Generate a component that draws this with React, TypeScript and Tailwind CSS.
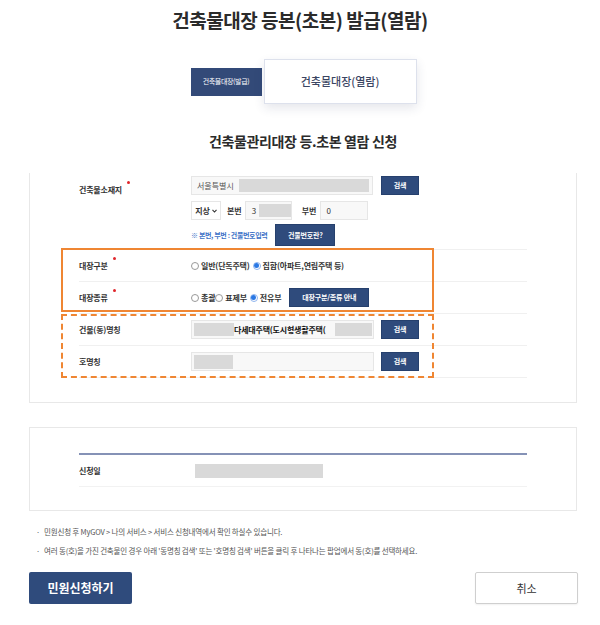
// ─── helpers ──────────────────────────────────────────────────────────────────

function NavyButton({ children, className = '' }: { children: React.ReactNode; className?: string }) {
  return (
    <button
      type="button"
      className={`flex items-center justify-center bg-[#2f4b7c] text-white font-bold text-[7px] leading-none tracking-tight border border-[#26406d] ${className}`}
    >
      {children}
    </button>
  )
}

function Radio({ checked, label }: { checked?: boolean; label: string }) {
  return (
    <span className="flex items-center gap-[2px]">
      <span
        className={`flex h-[8px] w-[8px] items-center justify-center rounded-full border ${
          checked ? 'border-[#8fb4ee]' : 'border-[#999]'
        } bg-white`}
      >
        {checked && <span className="h-[5px] w-[5px] rounded-full bg-[#2a78e4]" />}
      </span>
      <span className="text-[8px] font-bold leading-[12px] text-[#333] tracking-tight">{label}</span>
    </span>
  )
}

function Label({ children, required }: { children: React.ReactNode; required?: boolean }) {
  return (
    <span className="relative inline-block text-[8px] font-bold text-[#333] tracking-tight leading-[12px]">
      {children}
      {required && (
        <span className="absolute -right-[8px] -top-[3px] h-[3px] w-[3px] rounded-full bg-[#e0262b]" />
      )}
    </span>
  )
}

function Row({ label, required, children }: { label: string; required?: boolean; children: React.ReactNode }) {
  return (
    <div className="flex h-[32px] items-center border-t border-[#f0f0f0] leading-[12px]">
      <div className="flex w-[112px] items-center">
        <Label required={required}>{label}</Label>
      </div>
      <div className="flex items-center">{children}</div>
    </div>
  )
}

const inputBox = 'h-[19px] border border-[#e6e6e6] bg-[#f8f8f8] flex items-center leading-[12px]'

// ─── App ──────────────────────────────────────────────────────────────────────

export default function App() {
  return (
    <div className="h-[625px] w-[600px] overflow-hidden bg-white font-['Noto_Sans_CJK_KR','Noto_Sans',sans-serif] text-[#333]">
      <h1 className="pt-[9px] text-center text-[19px] font-bold leading-[22px] tracking-tight text-[#2b2b2b]">
        건축물대장 등본(초본) 발급(열람)
      </h1>

      <div className="mt-[28px] flex items-center justify-center pl-[7px]">
        <div className="flex h-[28px] w-[71px] items-center justify-center bg-[#334a78] text-[7px] tracking-tighter text-white">
          건축물대장(발급)
        </div>
        <div className="ml-[2px] flex h-[45px] w-[153px] items-center justify-center border border-[#dde1ec] bg-white text-[11px] font-medium text-[#3a4562] shadow-[0_4px_10px_rgba(40,50,90,0.12)]">
          건축물대장(열람)
        </div>
      </div>

      <h2 className="mt-[28px] pl-[6px] text-center text-[14px] font-bold leading-[18px] tracking-tight text-[#2b2b2b]">
        건축물관리대장 등.초본 열람 신청
      </h2>

      {/* main form card */}
      <div className="relative ml-[29px] mt-[23px] w-[548px] border-x border-b border-[#e8e8e8] pb-[24px] pl-[49px] pr-[49px]">
        <div className="flex h-[76px]">
          <div className="w-[112px] pt-[7px] leading-[12px]">
            <Label required>건축물소재지</Label>
          </div>
          <div className="flex flex-col pt-[3px]">
            <div className="flex items-center">
              <div className={`${inputBox} w-[182px] pl-[5px]`}>
                <span className="text-[8px] text-[#555]">서울특별시</span>
                <span className="ml-[5px] h-[13px] w-[130px] bg-[#d9d9d9]" />
              </div>
              <NavyButton className="ml-[8px] h-[19px] w-[38px]">검색</NavyButton>
            </div>
            <div className="mt-[6px] flex items-center leading-[12px]">
              <div className={`${inputBox} w-[30px] justify-center gap-[2px] bg-white`}>
                <span className="text-[8px] font-bold">지상</span>
                <svg width="5" height="4" viewBox="0 0 5 4">
                  <path d="M0.5 0.8 L2.5 3 L4.5 0.8" fill="none" stroke="#333" strokeWidth="1.1" />
                </svg>
              </div>
              <span className="ml-[6px] text-[8px] font-bold">본번</span>
              <div className={`${inputBox} ml-[3px] w-[47px] pl-[6px]`}>
                <span className="text-[8px]">3</span>
                <span className="ml-[3px] h-[13px] w-[34px] bg-[#d9d9d9]" />
              </div>
              <span className="ml-[10px] text-[8px] font-bold">부번</span>
              <div className={`${inputBox} ml-[4px] w-[48px] pl-[5px]`}>
                <span className="text-[8px]">0</span>
              </div>
            </div>
            <div className="mt-[4px] flex items-center leading-[12px]">
              <span className="text-[7px] font-bold tracking-tighter text-[#3b70c6]">※ 본번, 부번 : 건물번호입력</span>
              <NavyButton className="ml-[8px] h-[22px] w-[60px]">건물번호란?</NavyButton>
            </div>
          </div>
        </div>

        <Row label="대장구분" required>
          <div className="flex items-center gap-[3px]">
            <Radio label="일반(단독주택)" />
            <Radio checked label="집합(아파트,연립주택 등)" />
          </div>
        </Row>
        <Row label="대장종류" required>
          <div className="flex items-center">
            <Radio label="총괄" />
            <Radio label="표제부" />
            <span className="ml-[3px]">
              <Radio checked label="전유부" />
            </span>
            <NavyButton className="ml-[8px] h-[19px] w-[80px]">대장구분/종류 안내</NavyButton>
          </div>
        </Row>
        <Row label="건물(동)명칭">
          <div className={`${inputBox} w-[183px] pl-[2px]`}>
            <span className="h-[13px] w-[40px] bg-[#d9d9d9]" />
            <span className="w-[101px] overflow-hidden whitespace-nowrap text-[8px] font-bold tracking-tight text-[#111]">
              다세대주택(도시형생활주택(
            </span>
            <span className="h-[13px] w-[37px] bg-[#d9d9d9]" />
          </div>
          <NavyButton className="ml-[7px] h-[19px] w-[38px]">검색</NavyButton>
        </Row>
        <div className="border-b border-[#f0f0f0]">
          <Row label="호명칭">
            <div className={`${inputBox} w-[183px] pl-[2px]`}>
              <span className="h-[14px] w-[39px] bg-[#d9d9d9]" />
            </div>
            <NavyButton className="ml-[7px] h-[19px] w-[38px]">검색</NavyButton>
          </Row>
        </div>

        {/* orange annotation boxes */}
        <div className="pointer-events-none absolute left-[31px] top-[75px] h-[64px] w-[373px] border-[2px] border-[#ef8633]" />
        <div className="pointer-events-none absolute left-[31px] top-[141px] h-[64px] w-[373px] border-[2px] border-dashed border-[#ef8633]" />
      </div>

      {/* date card */}
      <div className="ml-[29px] mt-[24px] w-[548px] border border-[#e8e8e8] px-[49px] pb-[23px] pt-[25px]">
        <div className="h-[2px] bg-[#8592b6]" />
        <div className="flex h-[32px] items-center border-b border-[#f2f2f2] leading-[12px]">
          <div className="flex w-[116px] items-center">
            <Label>신청일</Label>
          </div>
          <span className="h-[14px] w-[128px] bg-[#d9d9d9]" />
        </div>
      </div>

      <ul className="ml-[36px] mt-[15px] flex flex-col gap-[7px] text-[7.5px] leading-[12px] tracking-tight text-[#555]">
        <li className="flex">
          <span className="w-[8px]">·</span>
          민원신청 후 MyGOV &gt; 나의 서비스 &gt; 서비스 신청내역에서 확인 하실수 있습니다.
        </li>
        <li className="flex">
          <span className="w-[8px]">·</span>
          여러 동(호)을 가진 건축물인 경우 아래 '동명칭 검색' 또는 '호명칭 검색' 버튼을 클릭 후 나타나는 팝업에서 동(호)를 선택하세요.
        </li>
      </ul>

      <div className="mt-[15px] flex justify-between pl-[29px] pr-[22px]">
        <button
          type="button"
          className="h-[32px] w-[103px] rounded-[2px] bg-[#2f4b7c] text-[12px] font-bold text-white"
        >
          민원신청하기
        </button>
        <button
          type="button"
          className="h-[32px] w-[103px] rounded-[2px] border border-[#cfcfcf] bg-white text-[11px] text-[#333] shadow-[0_1px_2px_rgba(0,0,0,0.06)]"
        >
          취소
        </button>
      </div>
    </div>
  )
}
